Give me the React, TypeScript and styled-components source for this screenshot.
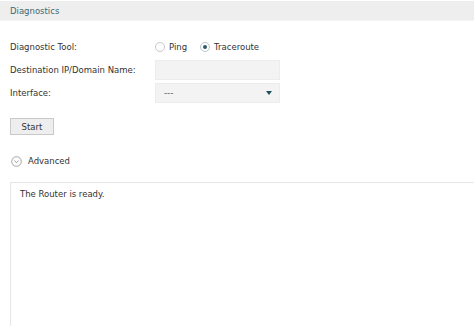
import React from "react";
import styled, { createGlobalStyle } from "styled-components";

const Global = createGlobalStyle`
  html, body { margin: 0; padding: 0; background: #fff; overflow: hidden; }
  body { font-family: "DejaVu Sans", Verdana, sans-serif; font-size: 8.5px; color: #333; }
`;

const Page = styled.div`
  width: 474px;
  height: 326px;
  overflow: hidden;
`;

const Header = styled.div`
  height: 19px;
  margin-top: 1px;
  background: #efeeee;
  border-bottom: 1px solid #f6f5f5;
  display: flex;
  align-items: center;
  padding-left: 10px;
  color: #3d6873;
  font-size: 8.5px;
`;

const Body = styled.div`
  padding-left: 10px;
  display: flex;
  flex-direction: column;
`;

const Row = styled.div<{ $top: number; $h: number }>`
  display: grid;
  grid-template-columns: 145px 125px;
  align-items: center;
  height: ${(p) => p.$h}px;
  margin-top: ${(p) => p.$top}px;
  flex-shrink: 0;
`;

const Label = styled.div`
  color: #333;
`;

const Radios = styled.div`
  display: flex;
  align-items: center;
  gap: 13px;
`;

const RadioItem = styled.label`
  display: flex;
  align-items: center;
  gap: 4px;
  color: #333;
`;

const RadioDot = styled.span<{ $on?: boolean }>`
  width: 8px;
  height: 8px;
  border-radius: 50%;
  border: 1px solid ${(p) => (p.$on ? "#b9c7ca" : "#c8c8c8")};
  background: #fff;
  display: flex;
  align-items: center;
  justify-content: center;
  &::after {
    content: "";
    width: 4px;
    height: 4px;
    border-radius: 50%;
    background: ${(p) => (p.$on ? "#2d5b66" : "transparent")};
  }
`;

const Field = styled.div`
  height: 20px;
  background: #f3f3f3;
  border: 1px solid #ececec;
  box-sizing: border-box;
`;

const Select = styled(Field)`
  display: flex;
  align-items: center;
  justify-content: space-between;
  padding: 0 7px 0 8px;
  color: #555;
`;

const Caret = styled.span`
  width: 0;
  height: 0;
  border-left: 3.5px solid transparent;
  border-right: 3.5px solid transparent;
  border-top: 4.5px solid #1f4f5c;
`;

const Button = styled.button`
  margin-top: 15px;
  width: 44px;
  height: 17px;
  box-sizing: border-box;
  background: #eeeeee;
  border: 1px solid #c9c9c9;
  font-family: inherit;
  font-size: 8.5px;
  color: #333;
  padding: 0;
`;

const Advanced = styled.div`
  margin-top: 20px;
  height: 12px;
  display: flex;
  align-items: center;
  gap: 6px;
  padding-left: 1px;
  flex-shrink: 0;
`;

const Output = styled.div`
  margin-top: 15px;
  width: 480px;
  height: 200px;
  border: 1px solid #e6e6e6;
  box-sizing: border-box;
  padding: 6px 9px;
  color: #333;
  flex-shrink: 0;
`;

export default function App() {
  return (
    <>
      <Global />
      <Page>
        <Header>Diagnostics</Header>
        <Body>
          <Row $top={18} $h={16}>
            <Label>Diagnostic Tool:</Label>
            <Radios>
              <RadioItem>
                <RadioDot />
                Ping
              </RadioItem>
              <RadioItem>
                <RadioDot $on />
                Traceroute
              </RadioItem>
            </Radios>
          </Row>
          <Row $top={5} $h={20}>
            <Label>Destination IP/Domain Name:</Label>
            <Field />
          </Row>
          <Row $top={3} $h={20}>
            <Label>Interface:</Label>
            <Select>
              <span>---</span>
              <Caret />
            </Select>
          </Row>
          <div>
            <Button>Start</Button>
          </div>
          <Advanced>
            <svg width="11" height="11" viewBox="0 0 11 11">
              <circle cx="5.5" cy="5.5" r="4.8" fill="none" stroke="#9a9a9a" strokeWidth="0.9" />
              <path d="M3.4 4.6 L5.5 6.7 L7.6 4.6" fill="none" stroke="#8a8a8a" strokeWidth="0.9" />
            </svg>
            <span>Advanced</span>
          </Advanced>
          <Output>The Router is ready.</Output>
        </Body>
      </Page>
    </>
  );
}
